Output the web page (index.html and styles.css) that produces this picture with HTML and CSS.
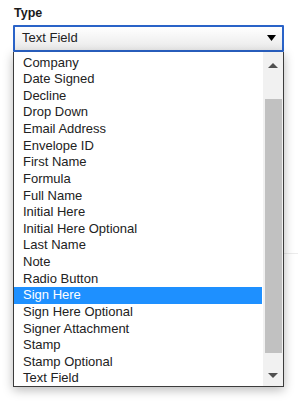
FILE: index.html
```html
<!DOCTYPE html>
<html>
<head>
<meta charset="utf-8">
<link rel="stylesheet" href="styles.css">
</head>
<body>
<div class="field">
  <div class="label">Type</div>
  <div class="select">
    <span class="value">Text Field</span>
    <svg class="caret" width="9" height="6" viewBox="0 0 9 6"><polygon points="0,0 9,0 4.5,6" fill="#000"/></svg>
  </div>
  <div class="rule"></div>
  <div class="dropdown">
    <ul class="options">
      <li>Company</li>
      <li>Date Signed</li>
      <li>Decline</li>
      <li>Drop Down</li>
      <li>Email Address</li>
      <li>Envelope ID</li>
      <li>First Name</li>
      <li>Formula</li>
      <li>Full Name</li>
      <li>Initial Here</li>
      <li>Initial Here Optional</li>
      <li>Last Name</li>
      <li>Note</li>
      <li>Radio Button</li>
      <li class="selected">Sign Here</li>
      <li>Sign Here Optional</li>
      <li>Signer Attachment</li>
      <li>Stamp</li>
      <li>Stamp Optional</li>
      <li>Text Field</li>
    </ul>
    <div class="scrollbar">
      <div class="arrow up"><svg width="10" height="5" viewBox="0 0 10 5"><polygon points="0,5 10,5 5,0" fill="#505050"/></svg></div>
      <div class="track"><div class="thumb"></div></div>
      <div class="arrow down"><svg width="10" height="5" viewBox="0 0 10 5"><polygon points="0,0 10,0 5,5" fill="#505050"/></svg></div>
    </div>
  </div>
</div>
</body>
</html>
```
FILE: styles.css
```css
html, body {
  margin: 0;
  padding: 0;
  background: #fff;
}
body {
  font-family: "Liberation Sans", Arial, sans-serif;
  color: #222;
  width: 298px;
  height: 402px;
  overflow: hidden;
}
.field {
  position: relative;
  padding: 6px 14px 0 13px;
}
.label {
  font-size: 12.5px;
  font-weight: bold;
  color: #1a1a1a;
  height: 19px;
  line-height: 14px;
  padding-left: 1px;
}
.select {
  height: 23px;
  border: 2px solid #2a63c8;
  border-radius: 1px;
  background: linear-gradient(#ffffff, #e9e9e9);
  display: flex;
  align-items: center;
  justify-content: space-between;
  padding: 0 6px 0 7px;
  font-size: 13px;
  color: #222;
}
.value {
  margin-top: -2px;
}
.caret {
  display: block;
  margin-top: -1px;
}
.rule {
  margin-top: 201px;
  margin-right: -14px;
  height: 1px;
  background: #ececec;
}
.dropdown {
  position: absolute;
  left: 13px;
  top: 52px;
  width: 269px;
  height: 334px;
  border: 1px solid #3c3c3c;
  border-top: none;
  background: #fff;
  box-shadow: 0 3px 10px rgba(0,0,0,0.28);
  display: flex;
  overflow: hidden;
}
.options {
  list-style: none;
  margin: 0;
  padding: 2.6px 0 0;
  flex: 1;
  font-size: 13px;
  overflow: hidden;
}
.options li {
  height: 16.63px;
  line-height: 16.63px;
  padding-left: 9px;
  color: #222;
  white-space: nowrap;
}
.options li.selected {
  background: #1e90ff;
  color: #fff;
}
.scrollbar {
  width: 20px;
  background: #f1f1f1;
  display: flex;
  flex-direction: column;
  margin-left: 1px;
}
.arrow {
  display: flex;
  justify-content: center;
  align-items: flex-start;
  box-sizing: border-box;
}
.arrow.up {
  height: 26px;
  padding-top: 11px;
}
.track {
  flex: 1;
  padding: 21px 1px 16px 2px;
}
.thumb {
  height: 100%;
  background: #c1c1c1;
}
.arrow.down {
  height: 17px;
  padding-top: 4px;
}
```
